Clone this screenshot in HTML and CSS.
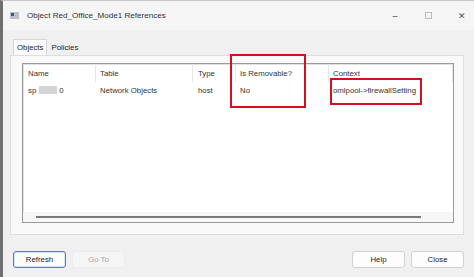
FILE: index.html
```html
<!DOCTYPE html>
<html lang="en">
<head>
  <meta charset="UTF-8">
  <title>Object Red_Office_Mode1 References</title>
  <link rel="stylesheet" href="styles.css">
</head>
<body>
  <div class="window">
    <div class="titlebar">
      <svg class="app-icon" width="9" height="7" viewBox="0 0 9 7">
        <rect x="0" y="0" width="9" height="7" fill="#b9c0c8"/>
        <rect x="1" y="1" width="3" height="3" fill="#3d5a80"/>
      </svg>
      <span class="title">Object Red_Office_Mode1 References</span>
      <div class="controls">
        <span class="ctl min">&#8211;</span>
        <span class="ctl max"></span>
        <span class="ctl close">&#10005;</span>
      </div>
    </div>

    <div class="body">
      <div class="tabs">
        <div class="tab active">Objects</div>
        <div class="tab">Policies</div>
      </div>
      <div class="panel">
        <div class="listview">
          <div class="row head">
            <div class="cell c1">Name</div>
            <div class="cell c2">Table</div>
            <div class="cell c3">Type</div>
            <div class="cell c4">Is Removable?</div>
            <div class="cell c5">Context</div>
          </div>
          <div class="row">
            <div class="cell c1">sp<span class="blur"></span>0</div>
            <div class="cell c2">Network Objects</div>
            <div class="cell c3">host</div>
            <div class="cell c4">No</div>
            <div class="cell c5">omlpool-&gt;firewallSetting</div>
          </div>
          <div class="spacer"></div>
          <div class="hscroll"><div class="thumb"></div></div>
        </div>
      </div>
      <div class="buttons">
        <button class="btn default">Refresh</button>
        <button class="btn disabled">Go To</button>
        <div class="grow"></div>
        <button class="btn">Help</button>
        <button class="btn">Close</button>
      </div>
    </div>

    <!-- annotation boxes drawn over the screenshot -->
    <div class="mark mark-removable"></div>
    <div class="mark mark-context"></div>
  </div>
</body>
</html>
```

FILE: styles.css
```css
html, body {
  margin: 0;
  padding: 0;
}

body {
  width: 474px;
  height: 277px;
  overflow: hidden;
  font-family: 'Liberation Sans', Arial, sans-serif;
  color: #222;
  background: #f0f0f0;
}

.window {
  position: relative;
  height: 277px;
  border-left: 3px solid #6f6f6f;
  border-top: 1px solid #c8c8c8;
  box-sizing: border-box;
  display: flex;
  flex-direction: column;
  background: #f0f0f0;
}

.titlebar {
  height: 29px;
  display: flex;
  align-items: center;
  padding-left: 7px;
  background: #f5f5f5;
}

.app-icon {
  margin-right: 8px;
}

.title {
  font-size: 8.1px;
  color: #333;
}

.controls {
  margin-left: auto;
  display: flex;
  align-items: center;
}

.ctl {
  text-align: center;
  font-size: 9px;
  color: #444;
}

.ctl.min {
  width: 20px;
}

.ctl.max {
  width: 7px;
  height: 7px;
  border: 1px solid #bbb;
  margin: 0 18px 0 20px;
  box-sizing: border-box;
}

.ctl.close {
  width: 24px;
  color: #555;
}

.body {
  flex: 1;
  padding: 9px 10px 0 7px;
  display: flex;
  flex-direction: column;
}

.tabs {
  display: flex;
  padding-left: 3px;
  height: 16px;
}

.tab {
  font-size: 7.8px;
  padding: 4px 4px 0;
  color: #222;
}

.tab.active {
  background: #fbfbfb;
  border: 1px solid #d6d6d6;
  border-bottom: none;
  padding: 3px 3px 0;
}

.panel {
  height: 180px;
  box-sizing: border-box;
  background: #f9f9f9;
  border: 1px solid #dedede;
  padding: 7px 9px 11px 11px;
  display: flex;
}

.listview {
  flex: 1;
  background: #fff;
  border: 1px solid #9a9a9a;
  box-shadow: inset 1px 1px 0 #e2e2e2;
  display: flex;
  flex-direction: column;
}

.row {
  display: flex;
  height: 16px;
  align-items: center;
  font-size: 7.8px;
  color: #333;
}

.row.head {
  height: 18px;
}

.cell {
  box-sizing: border-box;
  padding-left: 5px;
  white-space: nowrap;
}

.head .cell {
  border-right: 1px solid #e6e6e6;
  height: 100%;
  display: flex;
  align-items: center;
}

.c1 { width: 73px; padding-left: 5px; }
.c2 { width: 97px; padding-left: 4px; }
.c3 { width: 43px; padding-left: 5px; }
.c4 { width: 93px; padding-left: 4px; }
.c5 { flex: 1; padding-left: 4px; }

.blur {
  display: inline-block;
  width: 18px;
  height: 8px;
  background: #d4d4d4;
  vertical-align: -1px;
  margin: 0 2px 0 3px;
}

.spacer {
  flex: 1;
}

.hscroll {
  height: 10px;
  background: #f6f6f6;
  display: flex;
  align-items: center;
  padding-left: 13px;
}

.thumb {
  width: 385px;
  height: 2px;
  background: #7a7a7a;
}

.buttons {
  display: flex;
  align-items: center;
  margin-top: 16px;
  padding-left: 3px;
  gap: 6px;
}

.grow {
  flex: 1;
}

.btn {
  width: 53px;
  height: 17px;
  font-family: 'Liberation Sans', Arial, sans-serif;
  font-size: 7.8px;
  color: #222;
  background: #fdfdfd;
  border: 1px solid #d0d0d0;
  border-radius: 3px;
  padding: 0;
}

.btn.default {
  border: 1px solid #5a7fa8;
  box-shadow: inset 0 0 0 1px #d7e3ef;
}

.btn.disabled {
  color: #a8a8a8;
  background: #f5f5f5;
  border-color: #ececec;
}

.mark {
  position: absolute;
  border: 2px solid #d2101e;
  box-sizing: border-box;
}

.mark-removable {
  left: 227px;
  top: 53px;
  width: 76px;
  height: 54px;
}

.mark-context {
  left: 327px;
  top: 77px;
  width: 92px;
  height: 27px;
}
```
